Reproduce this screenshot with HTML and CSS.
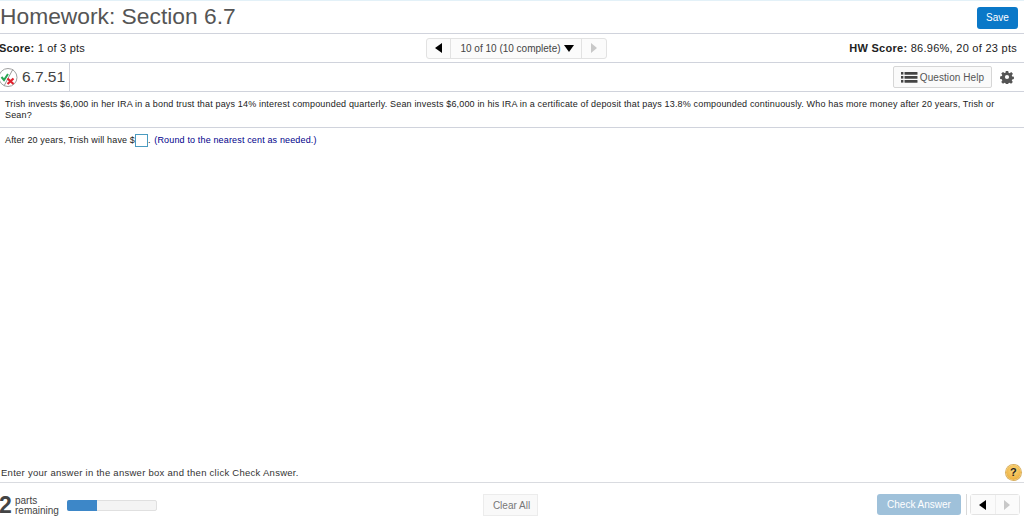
FILE: index.html
```html
<!DOCTYPE html>
<html lang="en">
<head>
<meta charset="utf-8">
<title>Homework: Section 6.7</title>
<link rel="stylesheet" href="styles.css">
</head>
<body>
<div class="page">
  <header class="head">
    <h1 class="title">Homework: Section 6.7</h1>
    <button class="save">Save</button>
  </header>
  <div class="score-row">
    <div class="score"><b>Score:</b> 1 of 3 pts</div>
    <div class="pager">
      <span class="pg-btn"><svg class="tri" width="8" height="10" viewBox="0 0 8 10"><path d="M7 0V10L0 5Z" fill="#000"/></svg></span>
      <span class="pg-label">10 of 10 (10 complete)<svg class="caret" width="10" height="7" viewBox="0 0 10 7"><path d="M0 0H10L5 7Z" fill="#000"/></svg></span>
      <span class="pg-btn pg-next"><svg width="6" height="10" viewBox="0 0 6 10"><path d="M0 0V10L6 5Z" fill="#c8c8c8"/></svg></span>
    </div>
    <div class="hw"><b>HW Score:</b> 86.96%, 20 of 23 pts</div>
  </div>
  <div class="q-row">
    <div class="q-id">
      <svg class="q-icon" width="19" height="21" viewBox="0 0 19 21">
        <circle cx="9" cy="10.5" r="9" fill="#fff" stroke="#a0a0a0" stroke-width="1"/>
        <path d="M14 2 5 19" stroke="#999" stroke-width="1"/>
        <path d="M2.5 10 5 13 9 7" fill="none" stroke="#2aa655" stroke-width="2"/>
        <path d="M8.5 11.5 14.5 17M14.5 11.5 8.5 17" stroke="#e0202c" stroke-width="2.2"/>
      </svg>
      <span class="q-num">6.7.51</span>
    </div>
    <div class="q-tools">
      <button class="help"><svg width="17" height="11" viewBox="0 0 17 11"><g fill="#444"><rect x="0" y="0" width="2.4" height="2.6"/><rect x="0" y="4" width="2.4" height="2.6"/><rect x="0" y="8" width="2.4" height="2.6"/><rect x="3.5" y="0" width="13" height="2.8" rx=".6"/><rect x="3.5" y="4" width="13" height="2.8" rx=".6"/><rect x="3.5" y="8" width="13" height="2.8" rx=".6"/></g></svg>Question Help</button>
      <svg class="gear" width="14" height="14" viewBox="0 0 14 14"><g fill="#555"><path fill-rule="evenodd" d="M5.6 0h2.8l.4 2 1.3.6L11.9 1.4l1.9 2-1.3 1.8.5 1.2 2 .4v0l-.1 2.6-1.9.4-.5 1.3 1.2 1.7-2 2-1.8-1.2-1.3.5-.4 2H5.8l-.4-2-1.3-.5-1.7 1.2-2-2 1.2-1.8-.5-1.3-2-.4V6.4l2-.4.5-1.2L.4 3.1l2-1.9 1.7 1.2L5.3 2ZM7 4.6a2.4 2.4 0 1 0 0 4.8 2.4 2.4 0 0 0 0-4.8Z" transform="translate(.9 .9) scale(.87)"/></g></svg>
    </div>
  </div>
  <p class="question">Trish invests $6,000 in her IRA in a bond trust that pays 14% interest compounded quarterly. Sean invests $6,000 in his IRA in a certificate of deposit that pays 13.8% compounded continuously. Who has more money after 20 years, Trish or Sean?</p>
  <div class="answer">
    <p class="answer-line">After 20 years, Trish will have $<span class="box"></span>. <span class="hint">(Round to the nearest cent as needed.)</span></p>
  </div>
  <div class="instruct">
    <span>Enter your answer in the answer box and then click Check Answer.</span>
    <span class="qmark">?</span>
  </div>
  <footer class="foot">
    <div class="parts">
      <span class="big2">2</span>
      <span class="parts-text">parts<br>remaining</span>
      <span class="progress"><span class="progress-fill"></span></span>
    </div>
    <button class="clear">Clear All</button>
    <div class="foot-right">
      <button class="check">Check Answer</button>
      <span class="sep"></span>
      <span class="mini">
        <span class="mini-btn"><svg width="8" height="10" viewBox="0 0 8 10"><path d="M7 0V10L0 5Z" fill="#000"/></svg></span>
        <span class="mini-btn"><svg width="6" height="10" viewBox="0 0 6 10"><path d="M0 0V10L6 5Z" fill="#c8c8c8"/></svg></span>
      </span>
    </div>
  </footer>
</div>
</body>
</html>
```
FILE: styles.css
```css
* { box-sizing: border-box; }
html, body { margin: 0; padding: 0; background: #fff; }
body { font-family: "Liberation Sans", Arial, sans-serif; color: #333; overflow: hidden; }
.page { width: 1024px; height: 525px; display: flex; flex-direction: column; border-top: 1px solid #e3f1f8; }
button { font-family: inherit; cursor: default; }

.head { height: 33px; flex: none; display: flex; align-items: center; justify-content: space-between; padding-right: 6px; border-bottom: 1px solid #d0d3dc; }
.title { margin: -2px 0 0; font-size: 22.8px; font-weight: 400; color: #555; line-height: 30px; }
.save { width: 41px; height: 22px; margin-top: 1px; background: #0a78c8; border: 0; border-radius: 3px; color: #fff; font-size: 10px; padding: 0; }

.score-row { height: 29px; flex: none; display: grid; grid-template-columns: 426px 181px 1fr; align-items: center; padding: 0 7px 0 0; border-bottom: 1px solid #d0d3dc; font-size: 11px; color: #222; letter-spacing: .2px; }
.score { margin-left: -1px; }
.score b, .hw b { font-weight: 700; color: #222; }
.hw { text-align: right; letter-spacing: .27px; }
.pager { display: flex; height: 21px; width: 181px; border: 1px solid #e2e2e2; border-radius: 3px; background: #fbfbfb; align-items: stretch; letter-spacing: 0; }
.pg-btn { width: 24px; display: flex; align-items: center; justify-content: center; border-right: 1px solid #e2e2e2; }
.pg-label { flex: 1; display: flex; align-items: center; justify-content: center; gap: 3px; padding-left: 2px; font-size: 10px; color: #444; border-right: 1px solid #e2e2e2; }
.pg-next { border-right: 0; }
.caret { margin-top: 1px; }

.q-row { height: 29px; flex: none; display: flex; justify-content: space-between; align-items: stretch; border-bottom: 1px solid #d0d3dc; padding-right: 10px; }
.q-id { width: 71px; display: flex; align-items: center; gap: 4px; margin-left: -1px; border-right: 1px solid #d0d3dc; }
.q-num { font-size: 15.5px; color: #444; }
.q-tools { display: flex; align-items: center; gap: 8px; }
.help { width: 99px; height: 22px; display: flex; align-items: center; justify-content: center; gap: 2px; background: #fafafa; border: 1px solid #d6d6d6; border-radius: 2px; font-size: 10px; letter-spacing: .08px; color: #555; padding: 0; }

.question { margin: 0; flex: none; height: 36px; padding: 7px 25px 0 5px; font-size: 9px; line-height: 11px; letter-spacing: .165px; color: #222; border-bottom: 1px solid #d0d3dc; }
.answer { flex: 1; padding: 5px 5px 0; }
.answer-line { margin: 0; font-size: 9px; line-height: 14px; letter-spacing: .15px; color: #222; display: flex; align-items: center; white-space: pre; }
.box { width: 13px; height: 13px; border: 1px solid #4a9bc0; }
.hint { color: #00008b; margin-left: 1px; }

.instruct { flex: none; height: 23px; display: flex; justify-content: space-between; align-items: center; padding: 3px 3px 0 1px; font-size: 9.5px; letter-spacing: .27px; color: #333; border-bottom: 1px solid #d9dbe0; }
.qmark { width: 15px; height: 15px; border-radius: 50%; background: radial-gradient(circle at 50% 35%, #fbd67a, #e8a52e); color: #222; font-size: 11px; font-weight: 700; display: flex; align-items: center; justify-content: center; box-shadow: 0 0 0 1px #d8b060; margin-top: -1px; }

.foot { flex: none; height: 42px; display: grid; grid-template-columns: 483px 55px 1fr; align-items: start; padding-top: 11px; }
.parts { display: flex; align-items: center; }
.big2 { font-size: 23px; font-weight: 700; color: #444; line-height: 22px; margin-left: -1px; width: 16px; }
.parts-text { font-size: 10px; line-height: 10px; margin-top: 2px; color: #444; width: 52px; }
.progress { width: 90px; height: 11px; margin-top: 0; border: 1px solid #e0e0e0; border-radius: 2px; background: #f4f4f4; }
.progress-fill { display: block; width: 30px; height: 11px; background: #3d87c8; margin: -1px 0 0 -1px; border-radius: 2px 0 0 2px; }
.clear { width: 55px; height: 22px; background: #f9f9f9; border: 1px solid #ececec; border-radius: 0; font-size: 10px; color: #777; padding: 0 0 0 2px; }
.foot-right { display: flex; justify-content: flex-end; align-items: center; padding-right: 4px; }
.check { width: 84px; height: 21px; background: #9fc1da; border: 0; border-radius: 3px; color: #fff; font-size: 10px; padding: 0; }
.sep { width: 1px; height: 21px; background: #d8d8d8; margin: 0 3px 0 5px; }
.mini { display: flex; width: 50px; height: 21px; border: 1px solid #e4e4e4; border-radius: 3px; }
.mini-btn { flex: 1; display: flex; align-items: center; justify-content: center; background: #fbfbfb; }
.mini-btn + .mini-btn { border-left: 1px solid #eee; }
```
